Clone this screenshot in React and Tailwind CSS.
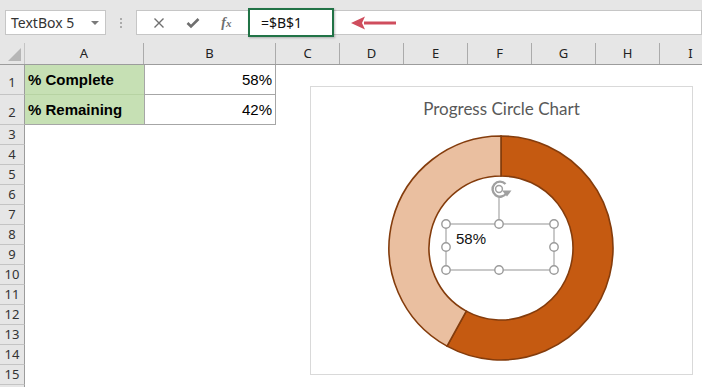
import React from "react";

const cols = [
  { k: "A", w: 119 },
  { k: "B", w: 132 },
  { k: "C", w: 64 },
  { k: "D", w: 64 },
  { k: "E", w: 64 },
  { k: "F", w: 64 },
  { k: "G", w: 64 },
  { k: "H", w: 64 },
  { k: "I", w: 62 },
];

const rows = [3, 4, 5, 6, 7, 8, 9, 10, 11, 12, 13, 14, 15];

function RowNum({ n, tall }) {
  return (
    <div
      className={
        "w-[25px] shrink-0 bg-[#e6e6e6] border-r border-r-[#9c9c9c] border-b border-b-[#c4c4c4] flex justify-center text-[13px] text-[#333] " +
        (tall ? "h-[30px] items-end pb-[2px]" : "h-[20px] items-center")
      }
    >
      {n}
    </div>
  );
}

function Handle({ x, y }) {
  return <circle cx={x} cy={y} r="4.2" fill="#fff" stroke="#9a9a9a" strokeWidth="1.4" />;
}

function Chart() {
  return (
    <div className="absolute left-[310px] top-[86px] w-[383px] h-[289px] bg-white border border-[#d9d9d9]">
      <div className="text-center text-[17px] text-[#595959] mt-[9px] font-['Lato',sans-serif]">
        Progress Circle Chart
      </div>
      <svg className="absolute left-0 top-0" width="383" height="289">
        <path
          d="M 190 49 A 112 112 0 1 1 136.04 259.15 L 155.31 224.09 A 72 72 0 1 0 190 89 Z"
          fill="#c55a11"
          stroke="#843c0c"
          strokeWidth="1.6"
        />
        <path
          d="M 136.04 259.15 A 112 112 0 0 1 190 49 L 190 89 A 72 72 0 0 0 155.31 224.09 Z"
          fill="#eabfa0"
          stroke="#843c0c"
          strokeWidth="1.6"
        />
        <rect x="135" y="137" width="108" height="46" fill="none" stroke="#a6a6a6" strokeWidth="1.2" />
        <line x1="188" y1="137" x2="188" y2="110" stroke="#a6a6a6" strokeWidth="1.2" />
        <path
          d="M 194.5 97 A 7.5 7.5 0 1 0 195.5 106"
          fill="none"
          stroke="#a0a0a0"
          strokeWidth="2.4"
        />
        <circle cx="188" cy="102" r="3.4" fill="none" stroke="#a0a0a0" strokeWidth="1.5" />
        <path d="M 191 103.5 L 200.5 103.5 L 196 109.5 Z" fill="#a0a0a0" />
        <Handle x={135} y={137} />
        <Handle x={188} y={137} />
        <Handle x={243} y={137} />
        <Handle x={135} y={160} />
        <Handle x={243} y={160} />
        <Handle x={135} y={183} />
        <Handle x={188} y={183} />
        <Handle x={243} y={183} />
        <text x="145" y="157" fontSize="15" fontFamily="Liberation Sans, Arial, sans-serif" fill="#111">
          58%
        </text>
      </svg>
    </div>
  );
}

export default function App() {
  return (
    <div className="relative w-[702px] h-[387px] overflow-hidden bg-white font-['Noto_Sans',sans-serif]">
      {/* formula bar */}
      <div className="h-[43px] bg-[#e6e6e6] flex items-start pt-[10px] pl-[5px]">
        <div className="w-[101px] h-[25px] bg-white border border-[#c6c6c6] flex items-center justify-between pl-[5px] pr-[6px] text-[14px] text-[#333]">
          <span>TextBox 5</span>
          <span className="w-0 h-0 border-l-[4px] border-r-[4px] border-t-[4px] border-l-transparent border-r-transparent border-t-[#7a7a7a]" />
        </div>
        <div className="w-[30px] h-[25px] flex flex-col items-center justify-center gap-[2px]">
          <span className="w-[2px] h-[2px] bg-[#ababab]" />
          <span className="w-[2px] h-[2px] bg-[#ababab]" />
          <span className="w-[2px] h-[2px] bg-[#ababab]" />
        </div>
        <div className="flex-1 h-[25px] bg-white border border-[#c6c6c6] flex items-center">
          <div className="w-[111px] h-full flex items-center justify-around px-[6px] text-[#7a7a7a]">
            <svg width="12" height="12" viewBox="0 0 12 12">
              <path d="M1.5 1.5 L10.5 10.5 M10.5 1.5 L1.5 10.5" stroke="#6f6f6f" strokeWidth="1.4" />
            </svg>
            <svg width="14" height="12" viewBox="0 0 14 12">
              <path d="M1.5 6 L5 9.5 L12.5 2" stroke="#6f6f6f" strokeWidth="2.6" fill="none" />
            </svg>
            <span className="font-['Liberation_Serif',serif] italic text-[14px] text-[#6f6f6f] font-bold leading-none">
              f<span className="text-[11px]">x</span>
            </span>
          </div>
          <div className="relative h-full flex-1">
            <div className="absolute left-[0px] top-[-3px] w-[86px] h-[29px] border-2 border-[#217346] bg-white flex items-center pl-[11px] text-[14px] text-[#111] shadow-[1px_1px_2px_rgba(0,0,0,0.25)]">
              =$B$1
            </div>
          </div>
        </div>
      </div>

      {/* arrow annotation */}
      <svg className="absolute left-[348px] top-[14px]" width="52" height="18" viewBox="0 0 52 18">
        <path d="M 16 9 L 48 9" stroke="#cf4d5d" strokeWidth="3" />
        <path d="M 3 9 L 17 2.5 L 14 9 L 17 15.5 Z" fill="#cf4d5d" />
      </svg>

      {/* column headers */}
      <div className="flex h-[22px] bg-[#e6e6e6] border-b border-[#9c9c9c]">
        <div className="w-[25px] shrink-0 relative border-r border-[#c4c4c4]">
          <svg className="absolute right-[3px] bottom-[3px]" width="13" height="13">
            <path d="M 13 0 L 13 13 L 0 13 Z" fill="#b6b6b6" />
          </svg>
        </div>
        {cols.map((c) => (
          <div
            key={c.k}
            style={{ width: c.w }}
            className="shrink-0 flex items-center justify-center text-[13px] text-[#222] border-r border-[#ababab]"
          >
            {c.k}
          </div>
        ))}
      </div>

      {/* rows 1-2 */}
      <div className="flex">
        <RowNum n={1} tall />
        <div className="w-[119px] h-[30px] bg-[#c6e0b4] flex items-end pb-[3px] pl-[3px] font-['Liberation_Sans',Arial,sans-serif] font-bold text-[15px] text-black border-b border-[#b7d3a3]">
          % Complete
        </div>
        <div className="w-[132px] h-[30px] border-l border-r border-b border-[#a6a6a6] flex items-end justify-end pb-[3px] pr-[3px] font-['Liberation_Sans',Arial,sans-serif] text-[15px] text-black">
          58%
        </div>
      </div>
      <div className="flex">
        <RowNum n={2} tall />
        <div className="w-[119px] h-[30px] bg-[#c6e0b4] flex items-end pb-[3px] pl-[3px] font-['Liberation_Sans',Arial,sans-serif] font-bold text-[15px] text-black border-b border-[#a6a6a6]">
          % Remaining
        </div>
        <div className="w-[132px] h-[30px] border-l border-r border-b border-[#a6a6a6] flex items-end justify-end pb-[3px] pr-[3px] font-['Liberation_Sans',Arial,sans-serif] text-[15px] text-black">
          42%
        </div>
      </div>
      {rows.map((n) => (
        <div key={n} className="flex">
          <RowNum n={n} />
        </div>
      ))}
      <div className="flex">
        <RowNum n="" />
      </div>

      <Chart />
    </div>
  );
}
